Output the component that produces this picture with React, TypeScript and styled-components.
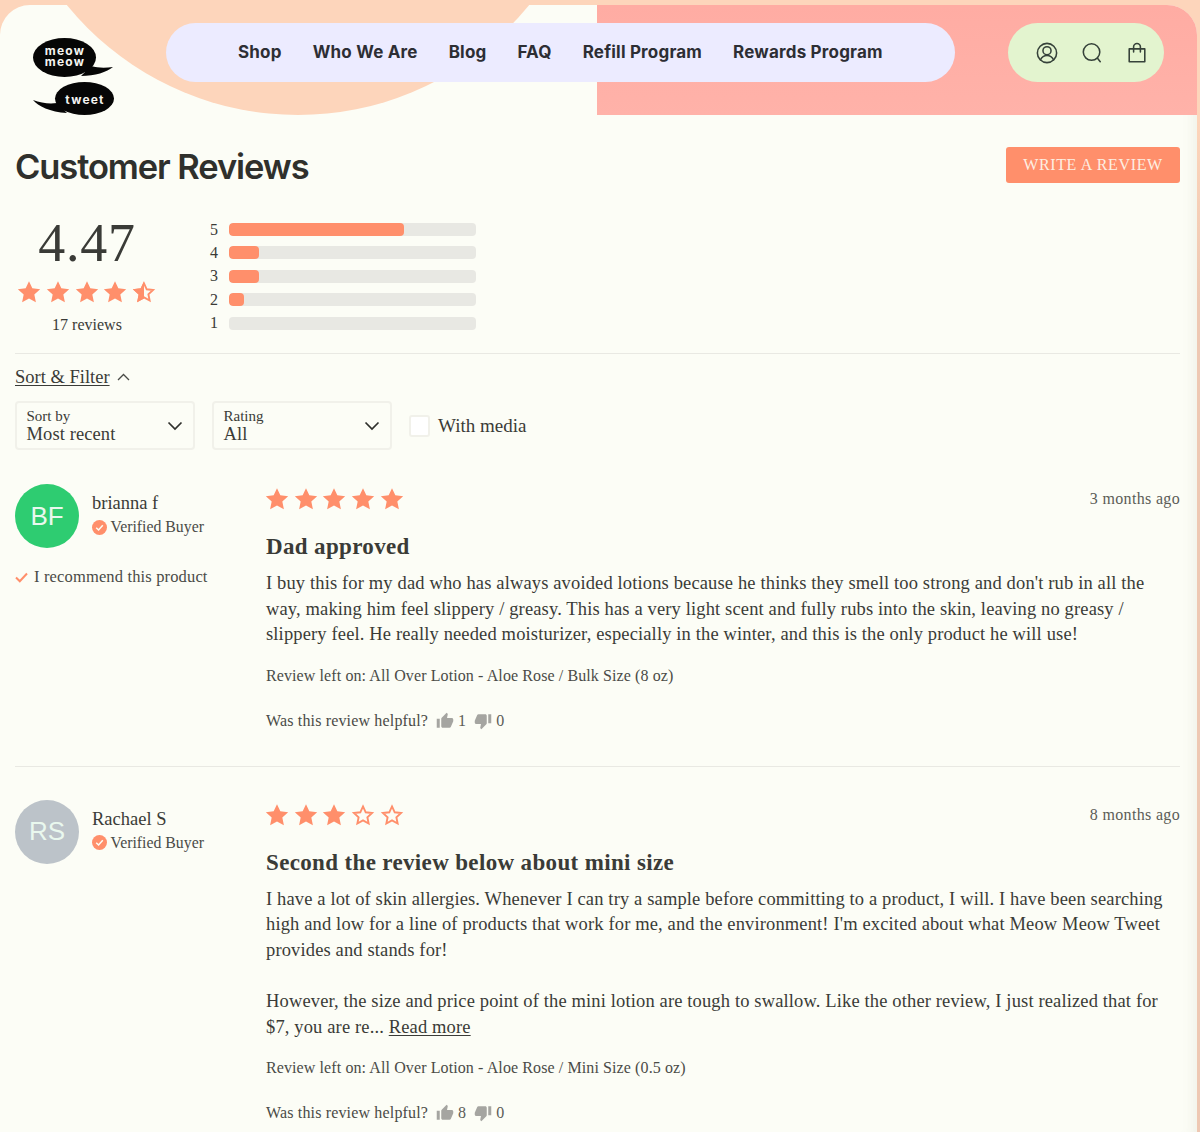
import * as React from 'react';
import styled, { createGlobalStyle } from 'styled-components';
import { MdThumbUp, MdThumbDown } from 'react-icons/md';

const serif = '"Liberation Serif", "Times New Roman", serif';
const sans = 'Inter, "Noto Sans", Arial, sans-serif';
const coral = '#ff8f6b';
const ink = '#3a3b37';
const paper = '#fcfdf6';

const GlobalStyle = createGlobalStyle`
  html, body {
    background: #fdd5bb;
    margin: 0;
    padding: 0;
  }
  * {
    box-sizing: border-box;
  }
`;

const Frame = styled.div`
  background: linear-gradient(180deg, #fdd5bb 0, #fdd5bb 120px, #eec8b3 300px, #eec8b3 100%);
  height: 1132px;
  overflow: hidden;
  padding: 5px 3px 0 0;
  width: 1200px;
`;

const Card = styled.div`
  background: ${paper};
  border-radius: 30px 30px 0 0;
  box-shadow: inset -14px 0 12px -10px rgba(120, 120, 100, 0.09);
  color: ${ink};
  font-family: ${serif};
  height: 100%;
  overflow: hidden;
  position: relative;
`;

const PeachCircle = styled.div`
  background: #fdd5bb;
  border-radius: 50%;
  height: 596px;
  left: 0;
  position: absolute;
  top: -486px;
  width: 596px;
`;

const PinkBlock = styled.div`
  background: linear-gradient(180deg, #ffaca3 0, #ffb2a9 100%);
  bottom: 0;
  position: absolute;
  right: 0;
  top: 0;
  width: 600px;
`;

const Header = styled.header`
  align-items: flex-start;
  display: flex;
  height: 110px;
  overflow: hidden;
  padding: 18px 33px 0 33px;
  position: relative;
`;

const LogoWrap = styled.div`
  flex: none;
  height: 82px;
  margin-top: 12px;
  position: relative;
  width: 82px;
`;

const NavPill = styled.nav`
  align-items: center;
  background: #ecebff;
  border-radius: 30px;
  display: flex;
  gap: 31px;
  height: 59px;
  margin-left: 51px;
  padding: 0 0 2px 72px;
  position: relative;
  width: 789px;
`;

const NavLink = styled.a`
  color: #2d2e34;
  font-family: ${sans};
  font-size: 17px;
  font-weight: 700;
  letter-spacing: 0.2px;
  white-space: nowrap;
`;

const IconPill = styled.div`
  align-items: center;
  background: #e3f4cf;
  border-radius: 30px;
  display: flex;
  gap: 23px;
  height: 59px;
  justify-content: center;
  margin-left: 53px;
  padding-left: 11px;
  position: relative;
  width: 156px;
`;

const Content = styled.main`
  padding: 0 17px 0 15px;
`;

const TitleRow = styled.div`
  align-items: flex-start;
  display: flex;
  height: 68px;
  justify-content: space-between;
  padding-top: 32px;
`;

const Title = styled.h1`
  color: #2f302c;
  font-family: ${sans};
  font-size: 34.5px;
  font-weight: 600;
  letter-spacing: -1.1px;
  line-height: 36px;
  margin: 2px 0 0;
`;

const WriteButton = styled.button`
  background: ${coral};
  border: none;
  border-radius: 3px;
  color: #fdeee2;
  font-family: ${serif};
  font-size: 16px;
  height: 36px;
  letter-spacing: 0.65px;
  padding: 0;
  width: 174px;
`;

const Summary = styled.section`
  display: flex;
  gap: 49px;
  margin-top: 34px;
`;

const ScoreColumn = styled.div`
  align-items: center;
  display: flex;
  flex-direction: column;
  width: 144px;
`;

const Score = styled.div`
  font-size: 54px;
  letter-spacing: 0.8px;
  line-height: 52px;
`;

const ScoreStars = styled.div`
  margin-top: 11px;
`;

const ReviewCount = styled.div`
  font-size: 16px;
  line-height: 22px;
  margin-top: 10px;
`;

const Bars = styled.div`
  display: flex;
  flex-direction: column;
  gap: 10.4px;
  padding-top: 6px;
`;

const BarRow = styled.div`
  align-items: center;
  display: flex;
  font-size: 16px;
  height: 13px;
  width: 270px;
`;

const BarLabel = styled.span`
  padding-left: 2px;
  width: 21px;
`;

const BarTrack = styled.div`
  background: #e8e8e3;
  border-radius: 4px;
  height: 13px;
  overflow: hidden;
  width: 247px;
`;

const BarFill = styled.div`
  background: ${coral};
  border-radius: 4px;
  height: 100%;
`;

const Divider = styled.hr`
  background: #e9e9e3;
  border: none;
  height: 1px;
  margin: 0;
`;

const SummaryDivider = styled(Divider)`
  margin-top: 17px;
`;

const SortToggle = styled.div`
  align-items: center;
  display: flex;
  font-size: 18.5px;
  gap: 7px;
  line-height: 24px;
  margin-top: 11px;
`;

const Underlined = styled.span`
  text-decoration: underline;
  text-underline-offset: 2px;
`;

const Filters = styled.div`
  align-items: center;
  display: flex;
  gap: 17px;
  margin-top: 12px;
`;

const SelectBox = styled.div`
  align-items: center;
  background: ${paper};
  border: 2px solid #f1f1ea;
  border-radius: 4px;
  display: flex;
  height: 49px;
  justify-content: space-between;
  padding: 0 10px 0 9.5px;
  width: 180px;
`;

const SelectLabel = styled.div`
  font-size: 15px;
  line-height: 16px;
`;

const SelectValue = styled.div`
  font-size: 18.5px;
  letter-spacing: 0.1px;
  line-height: 20px;
`;

const CheckField = styled.label`
  align-items: center;
  display: flex;
  font-size: 19px;
  gap: 8px;
`;

const CheckBox = styled.span`
  background: #fff;
  border: 2px solid #f1f1ea;
  border-radius: 3px;
  display: block;
  height: 22px;
  width: 21px;
`;

const Review = styled.article<{ $first?: boolean }>`
  display: grid;
  grid-template-columns: 251px 1fr;
  margin-top: ${({ $first }) => ($first ? '34px' : '33px')};
`;

const AuthorHead = styled.div`
  display: flex;
  gap: 13px;
`;

const Avatar = styled.div<{ $color: string }>`
  align-items: center;
  background: ${({ $color }) => $color};
  border-radius: 50%;
  color: #e9f8ee;
  display: flex;
  flex: none;
  font-family: "Liberation Sans", Arial, sans-serif;
  font-size: 26px;
  height: 64px;
  justify-content: center;
  width: 64px;
`;

const AuthorInfo = styled.div`
  padding-top: 8px;
`;

const AuthorName = styled.div`
  font-size: 18.5px;
  line-height: 22px;
`;

const Verified = styled.div`
  align-items: center;
  color: #4a4b47;
  display: flex;
  font-size: 15.8px;
  gap: 3.5px;
  line-height: 22px;
  margin-top: 2px;
`;

const Recommend = styled.div`
  align-items: center;
  color: #4a4b47;
  display: flex;
  font-size: 16.5px;
  gap: 6px;
  letter-spacing: 0.15px;
  line-height: 22px;
  margin-top: 18px;
`;

const TopLine = styled.div`
  align-items: center;
  display: flex;
  justify-content: space-between;
  padding-top: 3px;
`;

const TimeAgo = styled.span`
  color: #5b5c57;
  font-size: 16px;
  letter-spacing: 0.33px;
`;

const ReviewTitle = styled.h2`
  font-size: 23px;
  font-weight: 700;
  letter-spacing: 0.35px;
  line-height: 30px;
  margin: 21px 0 0;
`;

const Body = styled.p`
  font-size: 18.5px;
  letter-spacing: 0.14px;
  line-height: 25.6px;
  margin: 9px 0 0;
`;

const ProductLine = styled.div`
  color: #4a4b47;
  font-size: 16px;
  letter-spacing: 0.1px;
  line-height: 22px;
  margin-top: 17px;
`;

const Helpful = styled.div`
  align-items: center;
  color: #4a4b47;
  display: flex;
  font-size: 16px;
  letter-spacing: 0.16px;
  line-height: 22px;
  margin-top: 23px;
`;

const Vote = styled.span`
  align-items: center;
  color: #5b5c57;
  display: flex;
  gap: 4px;
  margin-left: 8px;
`;

const ReviewDivider = styled(Divider)`
  margin-top: 34px;
`;

type StarKind = 'full' | 'half' | 'empty';

const STAR = 'M12 1.6l3.2 6.9 7.5.9-5.6 5.1 1.5 7.4L12 18.2l-6.6 3.7 1.5-7.4L1.3 9.4l7.5-.9z';

const Star = ({ kind, id }: { kind: StarKind; id: string }) => (
  <svg width="24" height="24" viewBox="0.5 0.5 23 23" style={{ display: 'block' }}>
    {kind === 'half' && (
      <clipPath id={id}>
        <rect x="0" y="0" width="12" height="24" />
      </clipPath>
    )}
    {kind !== 'empty' && <path d={STAR} fill={coral} clipPath={kind === 'half' ? `url(#${id})` : undefined} />}
    {kind !== 'full' && <path d="M12 3.800l2.600 5.600 6.100.7-4.500 4.100 1.200 6L12 17.200l-5.400 3 1.200-6-4.500-4.100 6.100-.7z" fill="none" stroke={coral} strokeWidth="1.800" />}
  </svg>
);

const StarRow = styled.div`
  display: flex;
  gap: 4.7px;
  margin-left: -1px;
`;

const Stars = ({ values, name }: { values: StarKind[]; name: string }) => (
  <StarRow>
    {values.map((kind, i) => (
      <Star key={i} kind={kind} id={`${name}-${i}`} />
    ))}
  </StarRow>
);

const LogoText = styled.text`
  fill: #f4f4f0;
  font-family: ${sans};
  font-size: 12px;
  font-weight: 700;
  letter-spacing: 1.2px;
  text-anchor: middle;
`;

const Logo = () => (
  <svg width="82" height="82" viewBox="0 0 82 82">
    <ellipse cx="31.500" cy="22.500" rx="31.500" ry="19.500" fill="#060606" />
    <path d="M58 31c7 2 14 2 22 1-6 5-18 9-32 9z" fill="#060606" />
    <LogoText x="32" y="20">meow</LogoText>
    <LogoText x="32" y="31">meow</LogoText>
    <ellipse cx="51.500" cy="63.500" rx="29.500" ry="16.500" fill="#060606" />
    <path d="M24 68C16 69 8 68 0 65c5 6 17 12 34 13z" fill="#060606" />
    <LogoText x="52" y="68.500">tweet</LogoText>
  </svg>
);

const IconSvg = styled.svg`
  display: block;
  fill: none;
  height: 22px;
  stroke: #36423a;
  stroke-linecap: round;
  stroke-linejoin: round;
  stroke-width: 1.7;
  width: 22px;
`;

const UserIcon = () => (
  <IconSvg viewBox="0 0 24 24">
    <circle cx="12" cy="12" r="10.500" />
    <circle cx="12" cy="9.500" r="4.400" />
    <path d="M4.800 19.500c1.500-3.200 4-4.700 7.200-4.700s5.700 1.500 7.200 4.700" />
  </IconSvg>
);

const SearchIcon = () => (
  <IconSvg viewBox="0 0 24 24">
    <circle cx="11.500" cy="11" r="9" />
    <path d="M18 17.800L21 21.500" />
  </IconSvg>
);

const BagIcon = () => (
  <IconSvg viewBox="0 0 24 24">
    <path d="M3.500 7.500h17v14h-17z" />
    <path d="M8.300 11V5.300a3.700 3.700 0 0 1 7.400 0V11" />
  </IconSvg>
);

const VerifiedBadge = () => (
  <svg width="15" height="15" viewBox="0 0 16 16">
    <circle cx="8" cy="8" r="8" fill={coral} />
    <path d="M4.500 8.200l2.500 2.400 4.500-5" fill="none" stroke={paper} strokeWidth="1.600" />
  </svg>
);

const CheckMark = () => (
  <svg width="13" height="11" viewBox="0 0 13 11">
    <path d="M1 5.500l3.800 3.800L12 1.500" fill="none" stroke={coral} strokeWidth="2" />
  </svg>
);

const ChevronDown = () => (
  <svg width="16" height="10" viewBox="0 0 16 10">
    <path d="M1.500 1.500L8 8l6.500-6.500" fill="none" stroke="#2f302c" strokeWidth="1.700" />
  </svg>
);

const ChevronUp = () => (
  <svg width="13" height="8" viewBox="0 0 13 8">
    <path d="M1 7l5.500-5.500L12 7" fill="none" stroke="#4a4b47" strokeWidth="1.300" />
  </svg>
);

const distribution = [
  { label: '5', width: 175 },
  { label: '4', width: 30 },
  { label: '3', width: 30 },
  { label: '2', width: 15 },
  { label: '1', width: 0 },
];

const navItems = ['Shop', 'Who We Are', 'Blog', 'FAQ', 'Refill Program', 'Rewards Program'];

const App = () => {
  return (
    <Frame>
      <GlobalStyle />
      <Card>
        <Header>
          <PeachCircle />
          <PinkBlock />
          <LogoWrap>
            <Logo />
          </LogoWrap>
          <NavPill>
            {navItems.map((item) => (
              <NavLink key={item}>{item}</NavLink>
            ))}
          </NavPill>
          <IconPill>
            <UserIcon />
            <SearchIcon />
            <BagIcon />
          </IconPill>
        </Header>
        <Content>
          <TitleRow>
            <Title>Customer Reviews</Title>
            <WriteButton type="button">WRITE A REVIEW</WriteButton>
          </TitleRow>
          <Summary>
            <ScoreColumn>
              <Score>4.47</Score>
              <ScoreStars>
                <Stars name="avg" values={['full', 'full', 'full', 'full', 'half']} />
              </ScoreStars>
              <ReviewCount>17 reviews</ReviewCount>
            </ScoreColumn>
            <Bars>
              {distribution.map((row) => (
                <BarRow key={row.label}>
                  <BarLabel>{row.label}</BarLabel>
                  <BarTrack>
                    <BarFill style={{ width: row.width }} />
                  </BarTrack>
                </BarRow>
              ))}
            </Bars>
          </Summary>
          <SummaryDivider />
          <SortToggle>
            <Underlined>Sort &amp; Filter</Underlined>
            <ChevronUp />
          </SortToggle>
          <Filters>
            <SelectBox>
              <div>
                <SelectLabel>Sort by</SelectLabel>
                <SelectValue>Most recent</SelectValue>
              </div>
              <ChevronDown />
            </SelectBox>
            <SelectBox>
              <div>
                <SelectLabel>Rating</SelectLabel>
                <SelectValue>All</SelectValue>
              </div>
              <ChevronDown />
            </SelectBox>
            <CheckField>
              <CheckBox />
              With media
            </CheckField>
          </Filters>

          <Review $first>
            <div>
              <AuthorHead>
                <Avatar $color="#2ecc71">BF</Avatar>
                <AuthorInfo>
                  <AuthorName>brianna f</AuthorName>
                  <Verified>
                    <VerifiedBadge />
                    Verified Buyer
                  </Verified>
                </AuthorInfo>
              </AuthorHead>
              <Recommend>
                <CheckMark />I recommend this product
              </Recommend>
            </div>
            <div>
              <TopLine>
                <Stars name="r1" values={['full', 'full', 'full', 'full', 'full']} />
                <TimeAgo>3 months ago</TimeAgo>
              </TopLine>
              <ReviewTitle>Dad approved</ReviewTitle>
              <Body>
                I buy this for my dad who has always avoided lotions because he thinks they smell too strong and don't rub in all the way, making him feel slippery / greasy. This has a very light scent and fully rubs into the skin, leaving no greasy / slippery feel. He really needed moisturizer, especially in the winter, and this is the only product he will use!
              </Body>
              <ProductLine>Review left on: All Over Lotion - Aloe Rose / Bulk Size (8 oz)</ProductLine>
              <Helpful>
                Was this review helpful?
                <Vote>
                  <MdThumbUp size={18} color="#a5a5a1" /> 1
                </Vote>
                <Vote>
                  <MdThumbDown size={18} color="#a5a5a1" /> 0
                </Vote>
              </Helpful>
            </div>
          </Review>
          <ReviewDivider />

          <Review>
            <div>
              <AuthorHead>
                <Avatar $color="#bcc3c9">RS</Avatar>
                <AuthorInfo>
                  <AuthorName>Rachael S</AuthorName>
                  <Verified>
                    <VerifiedBadge />
                    Verified Buyer
                  </Verified>
                </AuthorInfo>
              </AuthorHead>
            </div>
            <div>
              <TopLine>
                <Stars name="r2" values={['full', 'full', 'full', 'empty', 'empty']} />
                <TimeAgo>8 months ago</TimeAgo>
              </TopLine>
              <ReviewTitle>Second the review below about mini size</ReviewTitle>
              <Body>
                I have a lot of skin allergies. Whenever I can try a sample before committing to a product, I will. I have been searching high and low for a line of products that work for me, and the environment! I'm excited about what Meow Meow Tweet provides and stands for!
                <br />
                <br />
                However, the size and price point of the mini lotion are tough to swallow. Like the other review, I just realized that for $7, you are re... <Underlined>Read more</Underlined>
              </Body>
              <ProductLine>Review left on: All Over Lotion - Aloe Rose / Mini Size (0.5 oz)</ProductLine>
              <Helpful>
                Was this review helpful?
                <Vote>
                  <MdThumbUp size={18} color="#a5a5a1" /> 8
                </Vote>
                <Vote>
                  <MdThumbDown size={18} color="#a5a5a1" /> 0
                </Vote>
              </Helpful>
            </div>
          </Review>
        </Content>
      </Card>
    </Frame>
  );
};

export default App;
